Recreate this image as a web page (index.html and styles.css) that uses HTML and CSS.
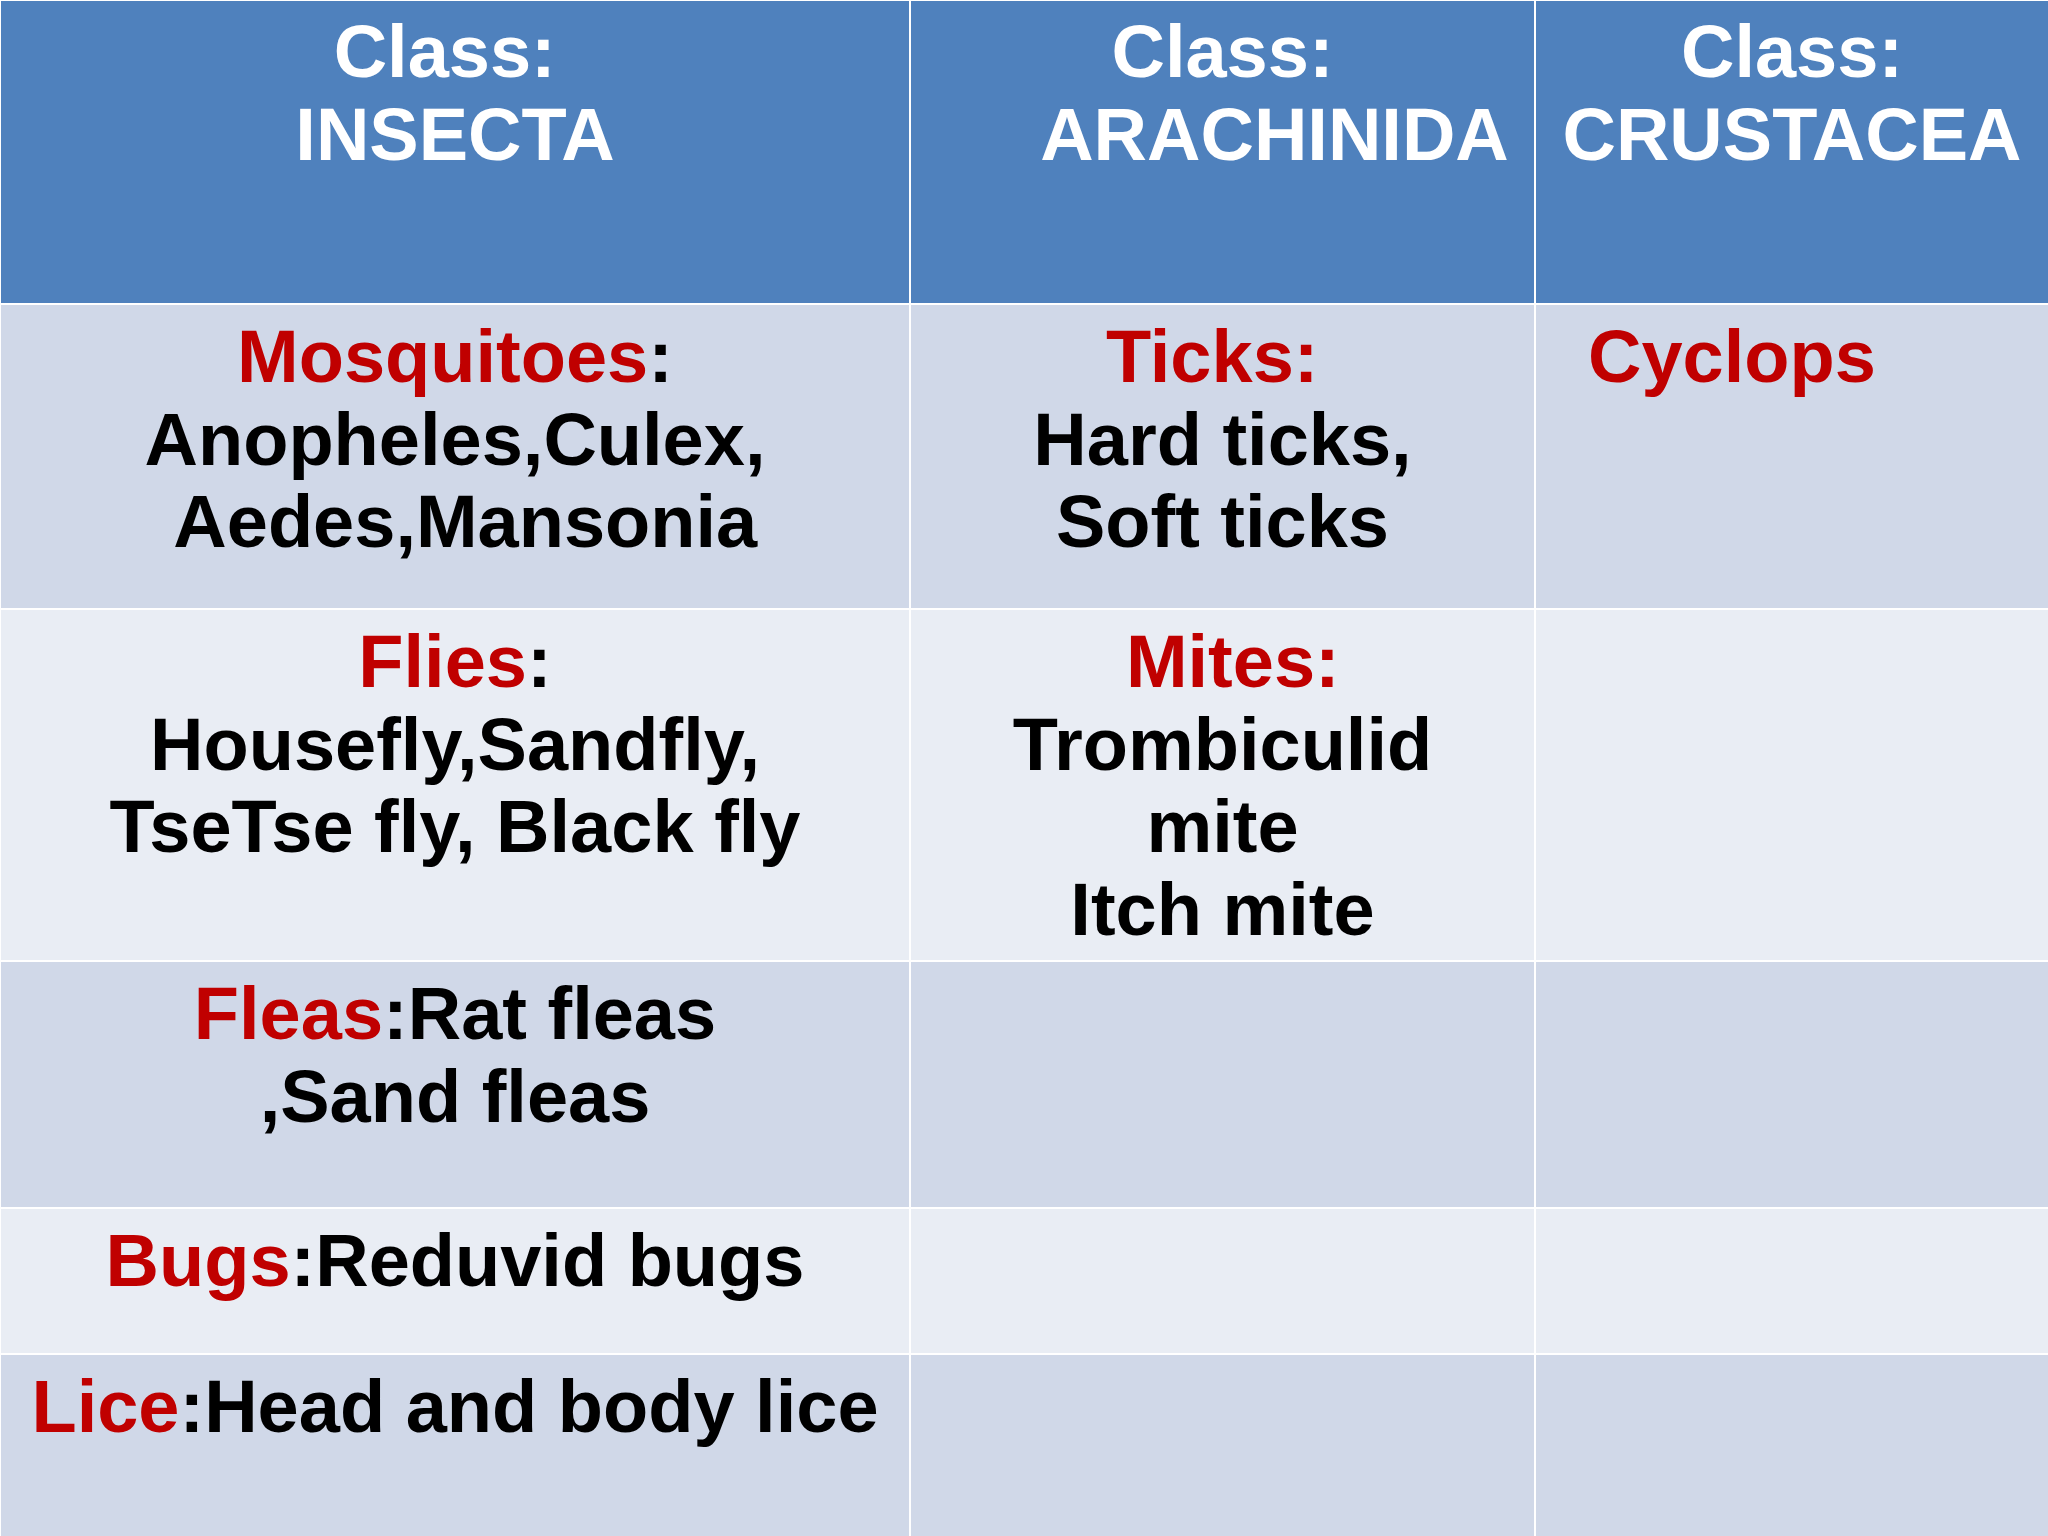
FILE: index.html
```html
<!DOCTYPE html>
<html lang="en">
<head>
<meta charset="utf-8">
<title>Arthropod classes</title>
<link rel="stylesheet" href="styles.css">
</head>
<body>
<div class="table">
  <div class="cell head">Class:&nbsp;<br>INSECTA</div>
  <div class="cell head">Class:<br><span class="shift">ARACHINIDA</span></div>
  <div class="cell head">Class:<br>CRUSTACEA</div>

  <div class="cell odd"><span class="red">Mosquitoes</span>:<br>Anopheles,Culex,<br>&nbsp;Aedes,Mansonia</div>
  <div class="cell odd"><span class="red">Ticks:</span>&nbsp;<br>Hard ticks,<br>Soft ticks</div>
  <div class="cell odd left"><span class="red">Cyclops</span></div>

  <div class="cell even"><span class="red">Flies</span>:<br>Housefly,Sandfly,<br>TseTse fly, Black fly</div>
  <div class="cell even">&nbsp;<span class="red">Mites:</span><br>Trombiculid<br>mite<br>Itch mite</div>
  <div class="cell even"></div>

  <div class="cell odd"><span class="red">Fleas</span>:Rat fleas<br>,Sand fleas</div>
  <div class="cell odd"></div>
  <div class="cell odd"></div>

  <div class="cell even"><span class="red">Bugs</span>:Reduvid bugs</div>
  <div class="cell even"></div>
  <div class="cell even"></div>

  <div class="cell odd"><span class="red">Lice</span>:Head and body lice</div>
  <div class="cell odd"></div>
  <div class="cell odd"></div>
</div>
</body>
</html>
```

FILE: styles.css
```css
html, body {
  margin: 0;
  padding: 0;
  width: 2048px;
  height: 1536px;
  overflow: hidden;
  background: #ffffff;
}

.table {
  display: grid;
  grid-template-columns: 908px 623px 1fr;
  grid-template-rows: 302px 303px 350px 245px 144px 181px;
  gap: 2px;
  padding: 1px 0 0 1px;
  background: #ffffff;
  width: 2048px;
  height: 1536px;
  box-sizing: border-box;
  font-family: "Liberation Sans", Arial, sans-serif;
  font-weight: bold;
  font-size: 74px;
  line-height: 82.5px;
}

.cell {
  padding-top: 11px;
  text-align: center;
  color: #000000;
  white-space: nowrap;
}

.head {
  background: #4f81bd;
  color: #ffffff;
  padding-top: 10px;
}

.odd {
  background: #d0d8e8;
}

.even {
  background: #e9edf4;
}

.left {
  text-align: left;
  padding-left: 52px;
}

.red {
  color: #c00000;
}

.shift {
  display: inline-block;
  margin-left: 104px;
}
```
